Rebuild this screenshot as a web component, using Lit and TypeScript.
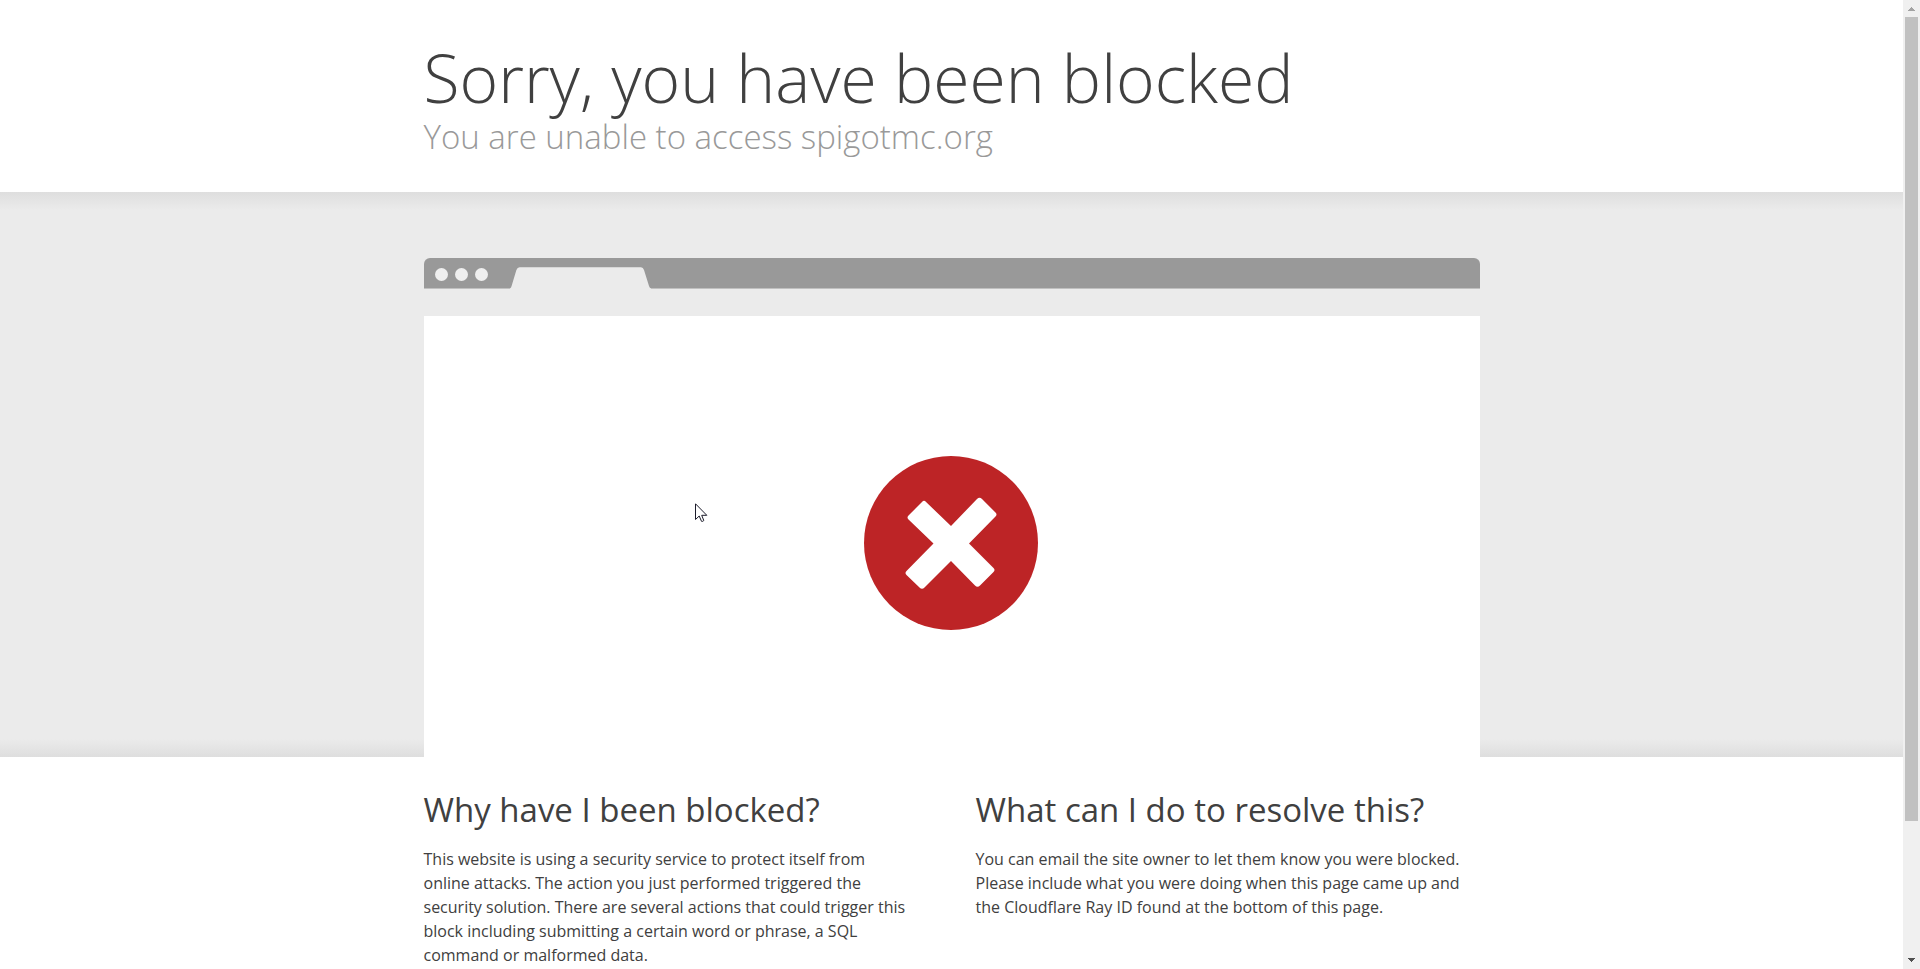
import { LitElement, html, css } from "lit";
import { customElement, property } from "lit/decorators.js";

@customElement("browser-bar")
class BrowserBar extends LitElement {
  static styles = css`
    :host {
      display: flex;
      align-items: flex-end;
      box-sizing: border-box;
      height: 31px;
      padding-left: 11px;
      background: #999;
      border-bottom: 1px solid #c0c0c0;
      border-radius: 6px 6px 0 0;
    }
    .dots {
      display: flex;
      align-self: center;
      gap: 7px;
      margin-right: 22px;
      padding-top: 3px;
    }
    .dot {
      width: 13px;
      height: 13px;
      border-radius: 50%;
      background: #efefef;
    }
    .tab {
      display: block;
      width: 141px;
      height: 22px;
      margin-bottom: -1px;
    }
  `;

  render() {
    return html`
      <div class="dots">
        <span class="dot"></span><span class="dot"></span><span class="dot"></span>
      </div>
      <svg class="tab" viewBox="0 0 141 22" aria-hidden="true">
        <path
          d="M0 21.5 Q1.2 20.5 1.6 19 L6.4 3 Q7.3 0.3 9.6 0.3 H131 Q133.2 0.3 134 3 L139 19 Q139.4 20.5 141 21.5 V22 H0 Z"
          fill="#ebebeb"
        />
      </svg>
    `;
  }
}

@customElement("page-scrollbar")
class PageScrollbar extends LitElement {
  static styles = css`
    :host {
      display: flex;
      flex-direction: column;
      flex: none;
      width: 17px;
      background: #f0f0f0;
    }
    .arrow {
      display: block;
      width: 17px;
      height: 17px;
      flex: none;
    }
    .track {
      flex: 1;
      padding: 0 2px;
    }
    .thumb {
      height: 86%;
      background: #c1c1c1;
    }
  `;

  render() {
    return html`
      <svg class="arrow" viewBox="0 0 17 17" shape-rendering="crispEdges" aria-hidden="true">
        <path d="M8 7h1v1h1v1h1v1h1v1H5v-1h1V9h1V8h1z" fill="#a3a3a3" />
      </svg>
      <div class="track"><div class="thumb"></div></div>
      <svg class="arrow" viewBox="0 0 17 17" shape-rendering="crispEdges" aria-hidden="true">
        <path d="M5 6h7v1h-1v1h-1v1H9v1H8V9H7V8H6V7H5z" fill="#505050" />
      </svg>
    `;
  }
}

@customElement("info-column")
class InfoColumn extends LitElement {
  static styles = css`
    :host {
      display: block;
      flex: 1;
      min-width: 0;
    }
    .title {
      margin: 0;
      font-size: 33px;
      line-height: 43px;
      font-weight: 400;
    }
    .text {
      margin: 16px 0 0;
      padding-right: 16px;
      font-size: 16px;
      line-height: 24px;
    }
  `;

  @property() heading = "";
  @property() text = "";

  render() {
    return html`
      <h2 class="title">${this.heading}</h2>
      <p class="text">${this.text}</p>
    `;
  }
}

@customElement("app-root")
class AppRoot extends LitElement {
  static styles = css`
    :host {
      display: flex;
      height: 100vh;
      overflow: hidden;
      background: #fff;
      color: #404040;
      font-family: "Open Sans", "Noto Sans", sans-serif;
    }
    .page {
      flex: 1;
      min-width: 0;
      overflow: hidden;
    }
    .wrapper {
      box-sizing: border-box;
      width: 90%;
      max-width: 1056px;
      margin: 0 auto;
    }
    .header {
      padding: 38px 0 34px;
    }
    .headline {
      margin: 0;
      font-size: 66px;
      line-height: 78px;
      font-weight: 300;
    }
    .subheadline {
      margin: 0;
      font-size: 33px;
      line-height: 42px;
      font-weight: 300;
      color: #999;
    }
    .band {
      padding-top: 66px;
      background: linear-gradient(#dedede, #ebebeb 18px, #ebebeb calc(100% - 18px), #dedede);
    }
    .panel {
      position: relative;
      display: flex;
      justify-content: center;
      box-sizing: border-box;
      height: 441px;
      margin-top: 27px;
      padding: 140px 2px 0 0;
      background: #fff;
    }
    .cross {
      width: 174px;
      height: 174px;
    }
    .pointer {
      position: absolute;
      left: 271px;
      top: 187px;
      width: 13px;
      height: 21px;
    }
    .columns {
      display: flex;
      gap: 48px;
      padding: 31px 0;
    }
  `;

  render() {
    return html`
      <main class="page">
        <header class="header wrapper">
          <h1 class="headline">Sorry, you have been blocked</h1>
          <h2 class="subheadline">You are unable to access spigotmc.org</h2>
        </header>
        <section class="band">
          <div class="wrapper">
            <browser-bar></browser-bar>
            <div class="panel">
              <svg class="cross" viewBox="0 0 174 174" role="img" aria-label="Blocked">
                <circle cx="87" cy="87" r="87" fill="#bd2426" />
                <path
                  d="M61 45 L87 70 L113 43 Q115.500 40.500 118 43 L131.500 56.500 Q133.500 58.500 131.500 60.500 L105 87.500 L129.500 112 Q131.500 114 129.500 116 L116 129.500 Q113.500 132 111 129.500 L87 105 L60.500 131.500 Q58 134 55.500 131.500 L42.500 119 Q40.500 117 42.500 115 L69.500 87.500 L44.500 63.500 Q42.500 61.500 44.500 59.500 L58 46 Q59.500 44 61 45 Z"
                  fill="#fff"
                />
              </svg>
              <svg class="pointer" viewBox="0 0 13 21" aria-hidden="true">
                <path
                  d="M0.500 0.800 V16.500 L4.200 13 L6.500 18.300 Q7.800 18.800 8.800 17.500 L6.700 12.300 H11.800 Z"
                  fill="#fff"
                  stroke="#1c1c2b"
                />
              </svg>
            </div>
          </div>
        </section>
        <section class="wrapper columns">
          <info-column
            heading="Why have I been blocked?"
            text="This website is using a security service to protect itself from online attacks. The action you just performed triggered the security solution. There are several actions that could trigger this block including submitting a certain word or phrase, a SQL command or malformed data."
          ></info-column>
          <info-column
            heading="What can I do to resolve this?"
            text="You can email the site owner to let them know you were blocked. Please include what you were doing when this page came up and the Cloudflare Ray ID found at the bottom of this page."
          ></info-column>
        </section>
      </main>
      <page-scrollbar></page-scrollbar>
    `;
  }
}
